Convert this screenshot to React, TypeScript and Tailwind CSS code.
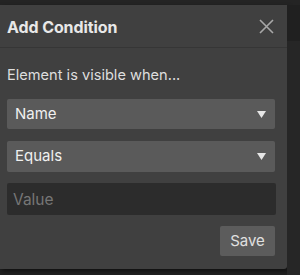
import { useState } from 'react';

// Dialogo para agregar una condicion de visibilidad
export default function App() {
  const [field, setField] = useState('Name');
  const [op, setOp] = useState('Equals');
  const [value, setValue] = useState('');

  return (
    <div className="w-[300px] h-[275px] bg-[#1f1f1f] overflow-hidden font-['Inter',sans-serif] flex flex-col">
      <div className="h-[5px] bg-[#242424] shrink-0" />
      <div className="flex flex-1 min-h-0">
        <div className="w-[287px] h-[264px] bg-[#404040] rounded-br-[3px] shadow-[2px_2px_4px_rgba(0,0,0,0.5)] flex flex-col">
          <div className="h-[43px] flex items-center justify-between pl-[7px] pr-[13px] pt-[1px] border-b border-[#363636]">
            <h1 className="text-[16px] font-bold text-[#e8e8e8] tracking-[-0.1px]">Add Condition</h1>
            <button type="button" className="text-[#a8a8a8]">
              <svg width="15" height="15" viewBox="0 0 15 15" fill="none" stroke="currentColor" strokeWidth="1.6">
                <path d="M1 1L14 14M14 1L1 14" />
              </svg>
            </button>
          </div>
          <div className="px-[7px] pt-[17px] flex flex-col">
            <p className="text-[14.6px] text-[#dedede] leading-[21px]">Element is visible when...</p>
            <div className="mt-[13px] h-[30px] bg-[#5a5a5a] rounded-[2px] flex items-center justify-between pl-[8px] pr-[9px] w-[268px]">
              <span className="text-[15px] text-[#f0f0f0]" onClick={() => setField(field)}>{field}</span>
              <svg width="9" height="7" viewBox="0 0 9 7"><path d="M0 0H9L4.5 7Z" fill="#e6e6e6" /></svg>
            </div>
            <div className="mt-[12px] h-[31px] bg-[#5a5a5a] rounded-[2px] flex items-center justify-between pl-[8px] pr-[9px] w-[268px]">
              <span className="text-[15px] text-[#f0f0f0]" onClick={() => setOp(op)}>{op}</span>
              <svg width="9" height="7" viewBox="0 0 9 7"><path d="M0 0H9L4.5 7Z" fill="#e6e6e6" /></svg>
            </div>
            <input
              value={value}
              onChange={(e) => setValue(e.target.value)}
              placeholder="Value"
              className="mt-[11px] h-[32px] w-[269px] bg-[#2c2c2c] rounded-[2px] px-[6px] text-[15.5px] text-[#ddd] placeholder:text-[#767676] outline-none"
            />
            <div className="flex justify-end mt-[11px] pr-[5px]">
              <button
                type="button"
                className="w-[55px] h-[30px] bg-[#5c5c5c] rounded-[2px] text-[15px] text-[#e0e0e0]"
              >
                Save
              </button>
            </div>
          </div>
        </div>
        <div className="flex-1 flex flex-col">
          <div className="h-[36px] bg-[#202020]" />
          <div className="flex-1 bg-[#262626]" />
        </div>
      </div>
    </div>
  );
}
